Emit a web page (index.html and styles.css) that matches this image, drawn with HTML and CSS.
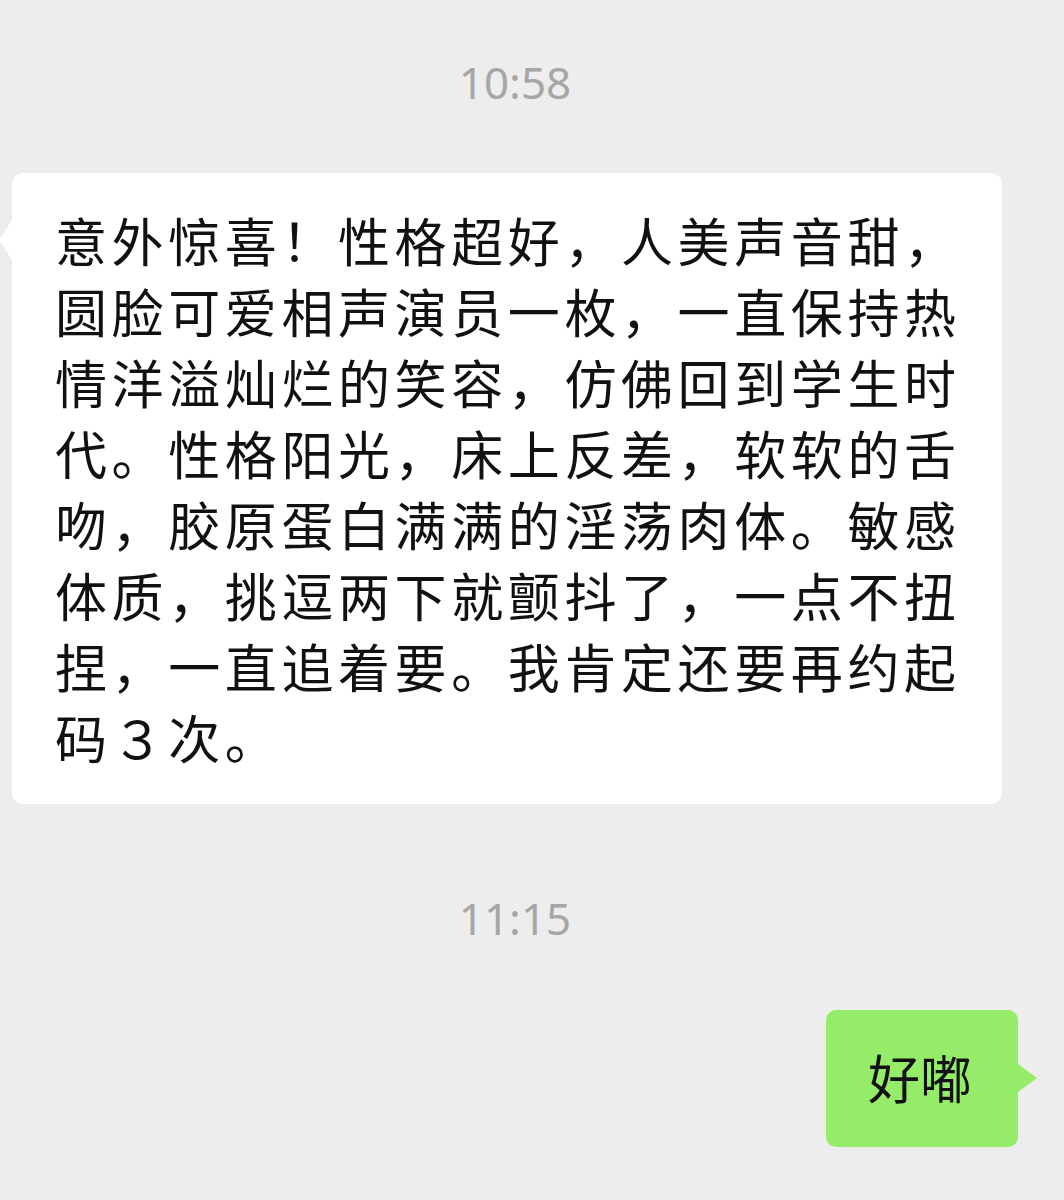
FILE: index.html
```html
<!DOCTYPE html>
<html lang="zh-CN">
<head>
    <meta charset="UTF-8">
    <meta name="viewport" content="width=device-width, initial-scale=1.0">
    <title>聊天</title>
    <link rel="stylesheet" href="styles.css">
</head>
<body>
    <div class="chat">
        <div class="time time-first">10:58</div>
        <div class="row row-left">
            <div class="bubble bubble-in">
                意外惊喜！性格超好，人美声音甜，<br>
                圆脸可爱相声演员一枚，一直保持热<br>
                情洋溢灿烂的笑容，仿佛回到学生时<br>
                代。性格阳光，床上反差，软软的舌<br>
                吻，胶原蛋白满满的淫荡肉体。敏感<br>
                体质，挑逗两下就颤抖了，一点不扭<br>
                捏，一直追着要。我肯定还要再约起<br>
                码３次。
            </div>
        </div>
        <div class="time time-second">11:15</div>
        <div class="row row-right">
            <div class="bubble bubble-out">好嘟</div>
        </div>
    </div>
</body>
</html>
```

FILE: styles.css
```css
body {
    margin: 0;
    background-color: #ededed;
    font-family: "Noto Sans CJK SC", sans-serif;
    color: #111111;
}
.chat {
    display: flex;
    flex-direction: column;
    padding-top: 52px;
    height: 1148px;
}
.time {
    height: 60px;
    line-height: 60px;
    text-align: center;
    font-family: "Noto Sans", sans-serif;
    font-size: 44px;
    color: #a6a6a6;
    padding-right: 34px;
}
.time-first {
    margin-bottom: 61px;
}
.time-second {
    margin-top: 84px;
    margin-bottom: 62px;
}
.row {
    display: flex;
}
.row-left {
    padding-left: 12px;
    padding-right: 62px;
}
.row-right {
    justify-content: flex-end;
    padding-right: 46px;
}
.bubble {
    position: relative;
    border-radius: 10px;
    font-size: 52px;
    line-height: 71px;
}
.bubble-in {
    flex: 1;
    background-color: #ffffff;
    padding: 31px 20px 32px 43px;
    letter-spacing: 4.6px;
    box-shadow: 0 0 1px rgba(0, 0, 0, 0.06);
}
.bubble-in::before {
    content: "";
    position: absolute;
    left: -13px;
    top: 47px;
    border-style: solid;
    border-width: 20px 13px 20px 0;
    border-color: transparent #ffffff transparent transparent;
}
.bubble-out {
    background-color: #95ec69;
    padding: 31px 46px 35px 42px;
}
.bubble-out::after {
    content: "";
    position: absolute;
    right: -19px;
    top: 54px;
    border-style: solid;
    border-width: 14px 0 14px 19px;
    border-color: transparent transparent transparent #95ec69;
}
```
